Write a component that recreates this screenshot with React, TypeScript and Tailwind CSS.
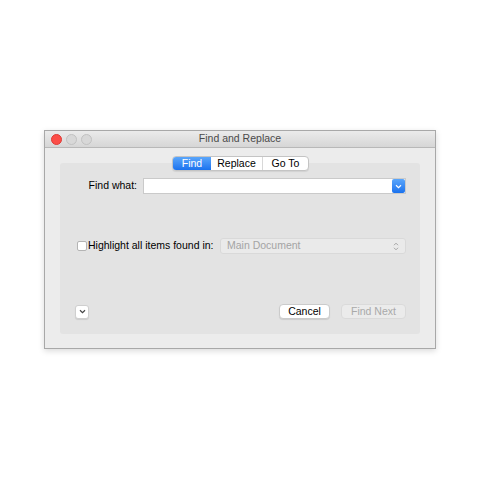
import React from "react";

const Chevron = ({ className = "" }: { className?: string }) => (
  <svg width="7" height="5" viewBox="0 0 7 5" className={className}>
    <path d="M1 1.2 L3.5 3.6 L6 1.2" fill="none" stroke="currentColor" strokeWidth="1.2" />
  </svg>
);

const App = () => {
  return (
    <div
      className="w-[480px] h-[480px] bg-white relative"
      style={{ fontFamily: '"Liberation Sans", Arial, sans-serif' }}
    >
      <div className="absolute left-[44px] top-[130px] w-[392px] h-[219px] border border-[#a8a8a8] bg-[#ececec] shadow-[0_2px_6px_rgba(0,0,0,0.15)] flex flex-col">
        {/* title bar */}
        <div className="h-[17px] bg-gradient-to-b from-[#ebebeb] to-[#d6d6d6] border-b border-[#b8b8b8] flex items-center relative">
          <div className="flex gap-[4px] pl-[6px]">
            <span className="w-[11px] h-[11px] rounded-full bg-[#fc4e48] border border-[#de3a35]" />
            <span className="w-[11px] h-[11px] rounded-full bg-[#d8d8d8] border border-[#c2c2c2]" />
            <span className="w-[11px] h-[11px] rounded-full bg-[#d8d8d8] border border-[#c2c2c2]" />
          </div>
          <div className="absolute inset-0 flex items-center justify-center text-[10.5px] text-[#4a4a4a]">
            Find and Replace
          </div>
        </div>

        {/* body */}
        <div className="flex-1 px-[15px] pt-[8px] pb-[14px] flex flex-col relative">
          {/* tabs */}
          <div className="absolute left-[127px] top-[8px] z-10 flex h-[15px] rounded-[4px] border border-[#c4c4c4] bg-white text-[10.5px] shadow-[0_1px_1px_rgba(0,0,0,0.08)] overflow-hidden">
            <div className="w-[38px] bg-gradient-to-b from-[#5aa6fb] to-[#1a72ee] text-white flex items-center justify-center">
              Find
            </div>
            <div className="w-[52px] text-black flex items-center justify-center border-r border-[#d8d8d8]">
              Replace
            </div>
            <div className="w-[45px] text-black flex items-center justify-center">
              Go To
            </div>
          </div>

          <div className="mt-[7px] h-[171px] bg-[#e3e3e3] rounded-[3px] relative">
            {/* find what */}
            <div className="flex items-center pt-[15px]">
              <div className="w-[83px] text-right text-[10.5px] text-black pr-[6px]">Find what:</div>
              <div className="w-[263px] h-[16px] bg-white border border-[#cacaca] flex justify-end">
                <div className="w-[13px] h-[14px] bg-gradient-to-b from-[#5aa6fb] to-[#1a72ee] rounded-[2px] flex items-center justify-center text-white">
                  <Chevron />
                </div>
              </div>
            </div>

            {/* highlight */}
            <div className="flex items-center mt-[44px] pl-[17px]">
              <span className="w-[10px] h-[10px] bg-white border border-[#b4b4b4] rounded-[2px]" />
              <span className="ml-[1px] w-[132px] text-[10.5px] text-black">Highlight all items found in:</span>
              <div className="w-[186px] h-[16px] rounded-[3px] bg-[#eaeaea] border border-[#d9d9d9] flex items-center justify-between px-[6px] text-[10.5px] text-[#a4a4a4]">
                <span>Main Document</span>
                <svg width="6" height="9" viewBox="0 0 6 9">
                  <path d="M1 3.2 L3 1.2 L5 3.2 M1 5.8 L3 7.8 L5 5.8" fill="none" stroke="#a4a4a4" strokeWidth="1" />
                </svg>
              </div>
            </div>

            {/* bottom buttons */}
            <div className="absolute left-[15px] right-[14px] bottom-[15px] flex items-center">
              <div className="w-[14px] h-[14px] bg-white rounded-[3px] border border-[#cfcfcf] shadow-[0_1px_1px_rgba(0,0,0,0.1)] flex items-center justify-center text-[#444]">
                <Chevron />
              </div>
              <div className="flex-1" />
              <div className="w-[51px] h-[15px] bg-white rounded-[4px] border border-[#cbcbcb] shadow-[0_1px_1px_rgba(0,0,0,0.1)] flex items-center justify-center text-[10.5px] text-black">
                Cancel
              </div>
              <div className="ml-[11px] w-[65px] h-[15px] bg-[#ebebeb] rounded-[4px] border border-[#dadada] flex items-center justify-center text-[10.5px] text-[#a9a9a9]">
                Find Next
              </div>
            </div>
          </div>
        </div>
      </div>
    </div>
  );
};

export default App;
